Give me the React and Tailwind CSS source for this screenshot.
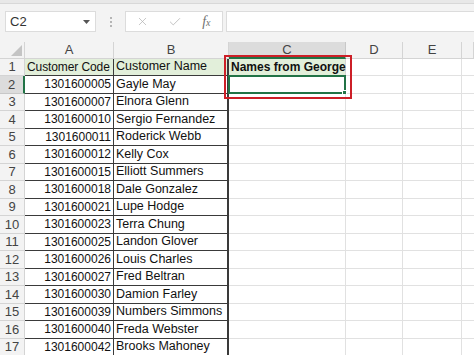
import React from "react";
import { X, Check } from "lucide-react";

const rows = [
  ["1301600005", "Gayle May"],
  ["1301600007", "Elnora Glenn"],
  ["1301600010", "Sergio Fernandez"],
  ["1301600011", "Roderick Webb"],
  ["1301600012", "Kelly Cox"],
  ["1301600015", "Elliott Summers"],
  ["1301600018", "Dale Gonzalez"],
  ["1301600021", "Lupe Hodge"],
  ["1301600023", "Terra Chung"],
  ["1301600025", "Landon Glover"],
  ["1301600026", "Louis Charles"],
  ["1301600027", "Fred Beltran"],
  ["1301600030", "Damion Farley"],
  ["1301600039", "Numbers Simmons"],
  ["1301600040", "Freda Webster"],
  ["1301600042", "Brooks Mahoney"],
];

const font = { fontFamily: '"Liberation Sans", Arial, sans-serif' };

function Toolbar() {
  return (
    <div className="h-[42px] bg-[#f3f3f3] flex flex-col">
      <div className="h-[4px] bg-[#e8e8e8] border-b border-[#d8d8d8]" />
      <div className="flex items-center h-[21px] mt-[7px]">
        {/* name box */}
        <div className="ml-[5px] w-[91px] h-full bg-white border border-[#dcdcdc] flex items-center justify-between pl-[4px] pr-[5px]">
          <span className="text-[13px] text-[#333]">C2</span>
          <svg width="7" height="4" viewBox="0 0 7 4">
            <path d="M0 0 L7 0 L3.5 4 Z" fill="#555" />
          </svg>
        </div>
        {/* dots */}
        <div className="w-[29px] flex flex-col items-center gap-[2px]">
          <span className="w-[2px] h-[2px] bg-[#a0a0a0] rounded-full" />
          <span className="w-[2px] h-[2px] bg-[#a0a0a0] rounded-full" />
          <span className="w-[2px] h-[2px] bg-[#a0a0a0] rounded-full" />
        </div>
        {/* buttons */}
        <div className="w-[98px] h-full bg-white border border-[#dcdcdc] flex items-center">
          <div className="w-[32px] flex justify-center ml-[1px]">
            <X size={13} strokeWidth={1.3} color="#b0b0b0" />
          </div>
          <div className="w-[33px] flex justify-center">
            <Check size={14} strokeWidth={1.3} color="#b0b0b0" />
          </div>
          <div className="w-[32px] flex justify-center">
            <span
              className="italic text-[14px] text-[#707070] leading-none"
              style={{ fontFamily: '"Liberation Serif", serif' }}
            >
              f<span className="text-[10px]">x</span>
            </span>
          </div>
        </div>
        <div className="ml-[3px] flex-1 h-full bg-white border border-[#dcdcdc] border-r-0" />
      </div>
    </div>
  );
}

const cols = ["A", "B", "C", "D", "E", ""];

export default function App() {
  return (
    <div className="w-[474px] h-[355px] overflow-hidden bg-white" style={font}>
      <Toolbar />
      <div className="relative">
        <div className="grid grid-cols-[25px_89px_115px_117px_57px_59px_1fr]">
          {/* header row */}
          <div className="h-[16.5px] bg-[#f3f3f3] border-r border-b border-[#d4d4d4] relative">
            <svg className="absolute right-[2px] bottom-[2px]" width="11" height="11" viewBox="0 0 11 11">
              <path d="M11 0 L11 11 L0 11 Z" fill="#c4c4c4" />
            </svg>
          </div>
          {cols.map((c, i) => (
            <div
              key={i}
              className={
                c === "C"
                  ? "h-[16.5px] bg-[#dcdcdc] border-r border-[#c8c8c8] border-b-2 border-b-[#217346] flex items-center justify-center text-[13px] text-[#444]"
                  : "h-[16.5px] bg-[#f3f3f3] border-r border-b border-[#d4d4d4] flex items-center justify-center text-[13px] text-[#444]"
              }
            >
              {c}
            </div>
          ))}

          {/* row 1 */}
          <div className="h-[17.5px] bg-[#f3f3f3] border-r border-b border-[#d4d4d4] flex items-center justify-center text-[13px] text-[#444]">
            1
          </div>
          <div className="h-[17.5px] bg-[#e2efda] border-r border-b border-[#3a3a3a] flex items-center px-[2px] text-[12px] tracking-[-0.1px] text-[#111] whitespace-nowrap overflow-hidden">
            Customer Code
          </div>
          <div className="h-[17.5px] bg-[#e2efda] border-r-2 border-b border-[#3a3a3a] flex items-center px-[2px] text-[12.5px] text-[#111] whitespace-nowrap">
            Customer Name
          </div>
          <div className="h-[17.5px] bg-[#e2efda] border-r border-b border-[#d4d4d4] flex items-center px-[2px] text-[12px] font-bold text-[#111] whitespace-nowrap">
            Names from George
          </div>
          <div className="h-[17.5px] border-r border-b border-[#e1e1e1]" />
          <div className="h-[17.5px] border-r border-b border-[#e1e1e1]" />
          <div className="h-[17.5px] border-b border-[#e1e1e1]" />

          {rows.map(([code, name], i) => {
            const n = i + 2;
            const sel = n === 2;
            return (
              <React.Fragment key={code}>
                <div
                  className={
                    sel
                      ? "h-[17.5px] bg-[#dcdcdc] border-r-2 border-r-[#217346] border-b border-[#c8c8c8] flex items-center justify-center text-[13px] text-[#444]"
                      : "h-[17.5px] bg-[#f3f3f3] border-r border-b border-[#d4d4d4] flex items-center justify-center text-[13px] text-[#444]"
                  }
                >
                  {n}
                </div>
                <div className="h-[17.5px] border-r border-b border-[#3a3a3a] flex items-center justify-end px-[2px] text-[12px] text-[#111]">
                  {code}
                </div>
                <div className="h-[17.5px] border-r-2 border-b border-[#3a3a3a] flex items-center px-[2px] text-[12.5px] text-[#111] whitespace-nowrap">
                  {name}
                </div>
                <div className="h-[17.5px] border-r border-b border-[#e1e1e1] relative">
                  {sel && (
                    <div className="absolute -left-[1px] -top-[1px] -right-[1px] -bottom-[1px] border-2 border-[#217346]">
                      <span className="absolute -right-[3px] -bottom-[3px] w-[5px] h-[5px] bg-[#217346] border border-white" />
                    </div>
                  )}
                </div>
                <div className="h-[17.5px] border-r border-b border-[#e1e1e1]" />
                <div className="h-[17.5px] border-r border-b border-[#e1e1e1]" />
                <div className="h-[17.5px] border-b border-[#e1e1e1]" />
              </React.Fragment>
            );
          })}
        </div>
        {/* red annotation box around C1:C2 */}
        <div className="absolute left-[224px] top-[13px] w-[128px] h-[44px] border-[2.5px] border-[#cc1f27] pointer-events-none" />
      </div>
    </div>
  );
}
